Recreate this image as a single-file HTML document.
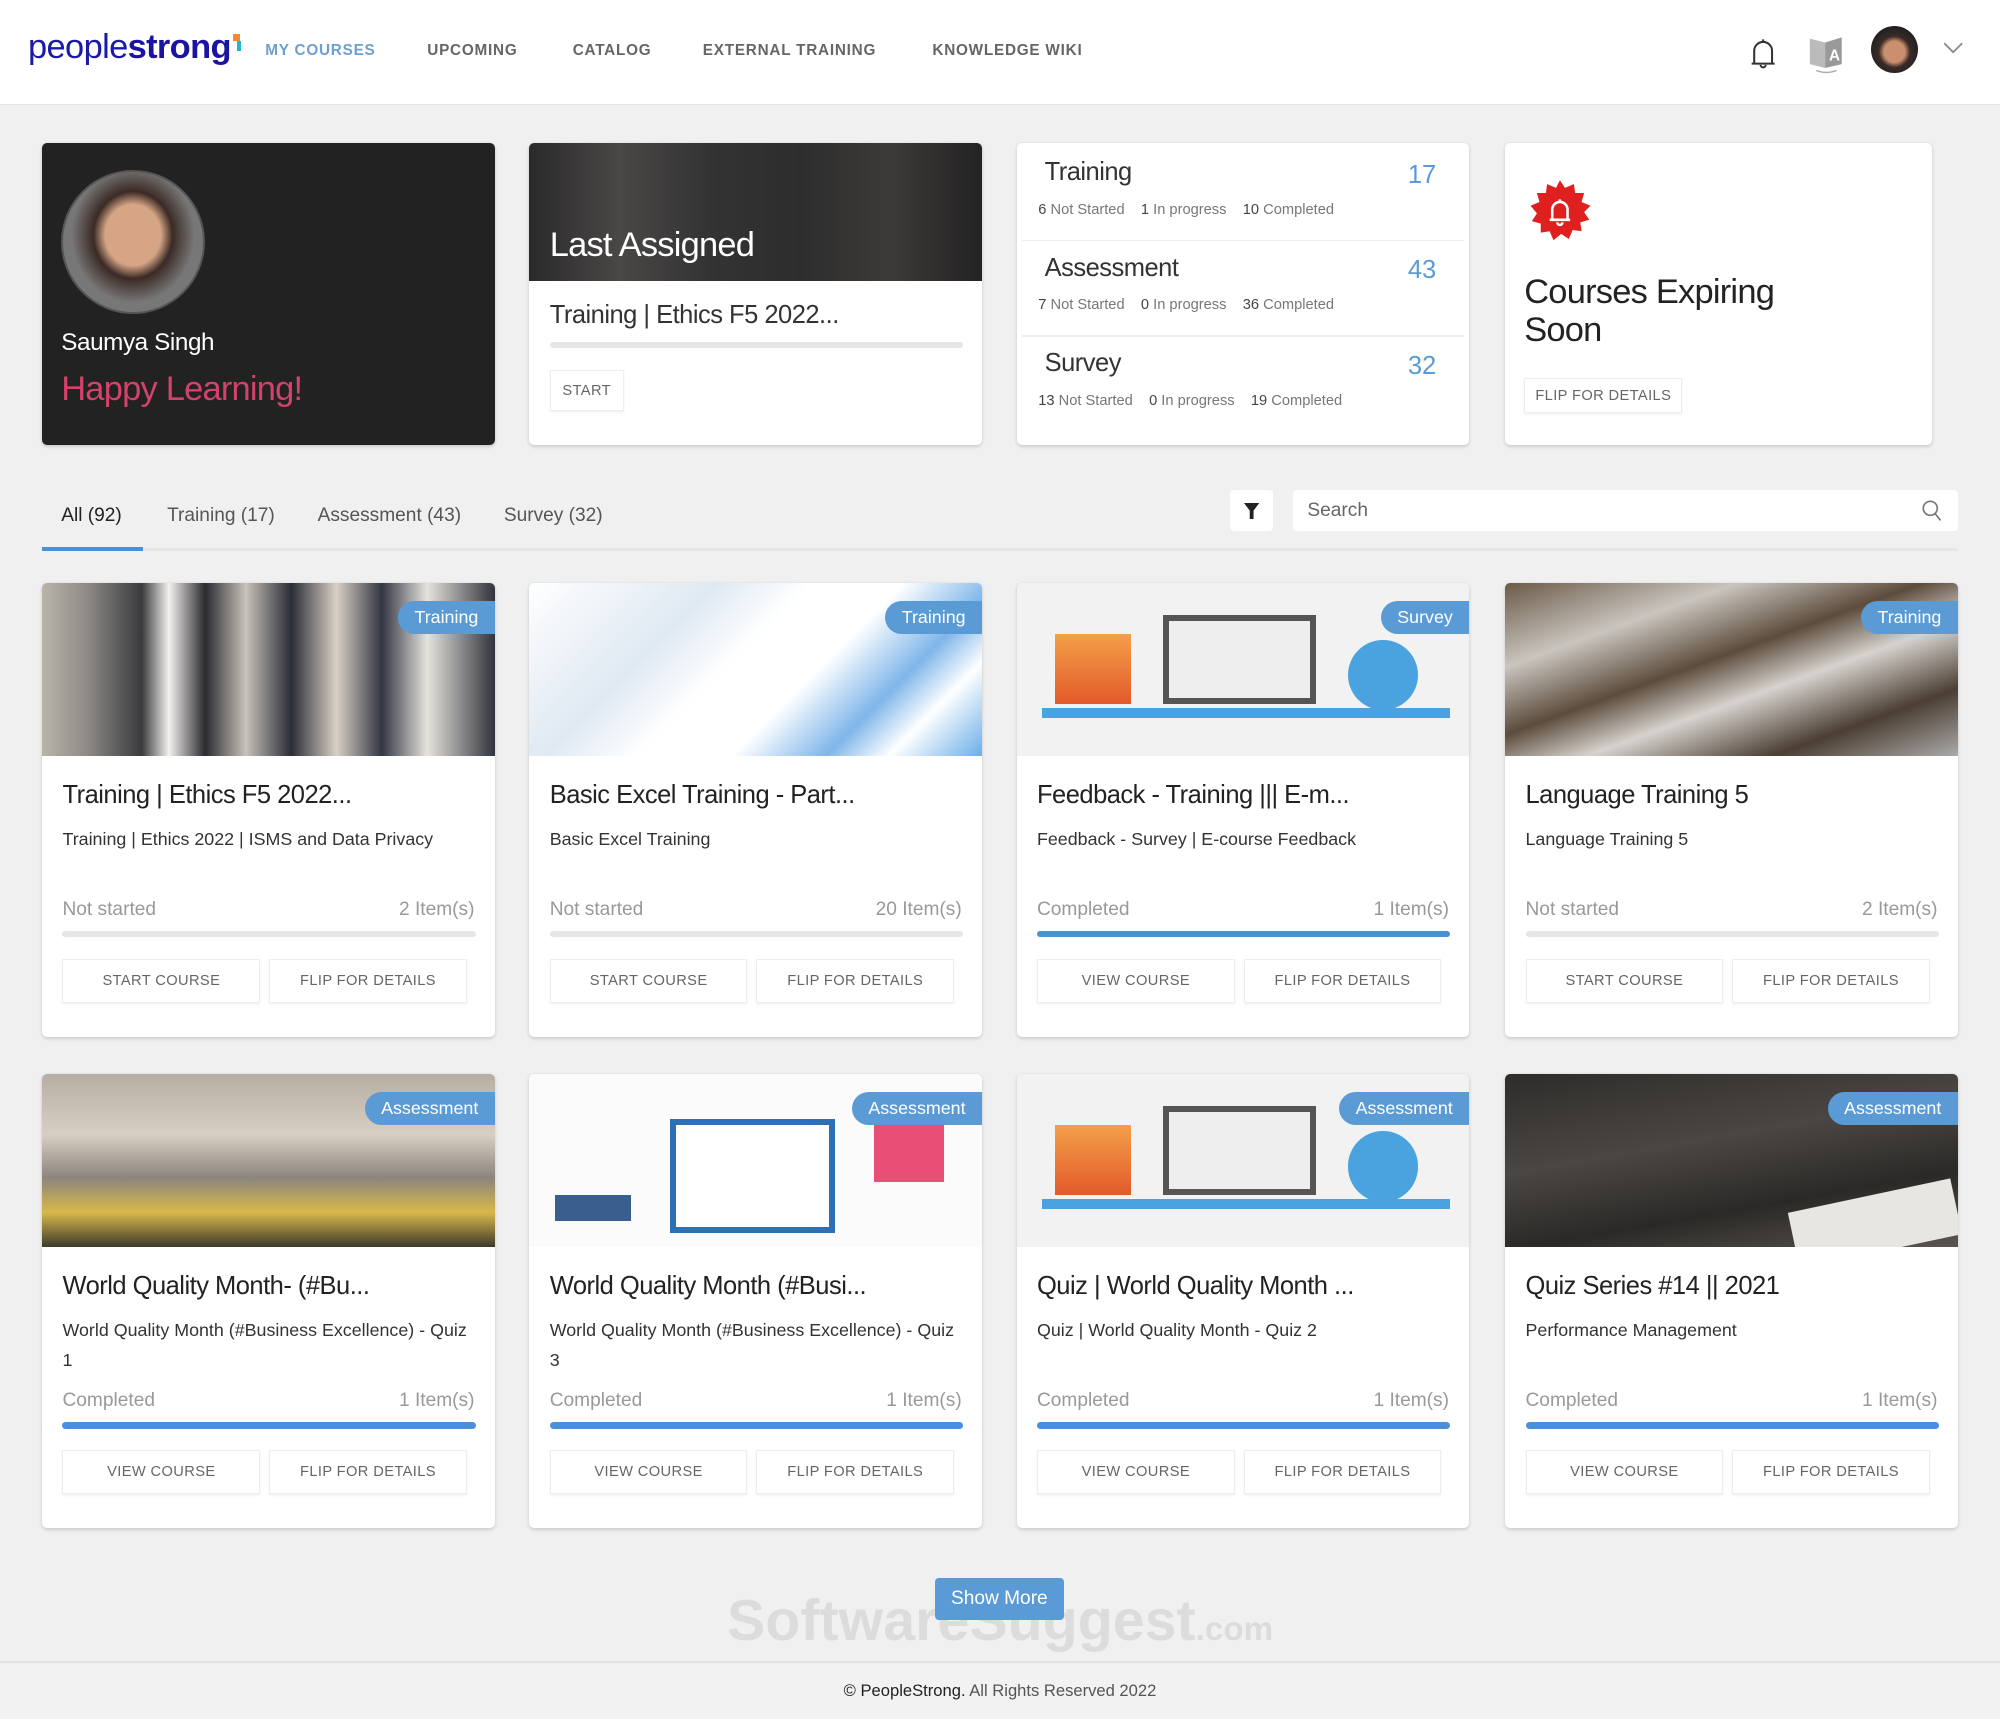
<!DOCTYPE html>
<html><head><meta charset="utf-8">
<style>
*{box-sizing:border-box;margin:0;padding:0}
html,body{width:2000px;height:1719px;overflow:hidden;background:#f0f0f0}
#w{zoom:1.27551;width:1568px;height:1348px;position:relative;font-family:"Liberation Sans",Arial,sans-serif;color:#222;background:#f0f0f0}
.a{position:absolute}
.hdr{left:0;top:0;width:1568px;height:82px;background:#fff;border-bottom:1px solid #e4e4e4}
.nav{top:33px;font-size:12px;font-weight:bold;letter-spacing:.6px;color:#666}
.card{background:#fff;border-radius:4px;box-shadow:0 1px 3px rgba(0,0,0,.18)}
.stt{font-size:20px;color:#333;left:22px;letter-spacing:-.4px}
.num{font-size:20px;color:#5b9bd5;right:26px}
.sub{font-size:11.5px;color:#777;left:17px}
.sub b{color:#444;font-weight:normal}
.btn{border:1px solid #eee;box-shadow:0 1px 2px rgba(0,0,0,.06);font-size:11.5px;color:#666;text-align:center;letter-spacing:.3px;background:#fff}
.cc{width:355px;height:356px}
.img{left:0;top:0;width:355px;height:136px;border-radius:4px 4px 0 0;overflow:hidden}
.bdg{right:0;top:14px;height:26px;padding:0 13px;line-height:26px;background:#5b9bd5;color:#fff;font-size:14px;border-radius:13px 0 0 13px}
.t{left:16px;top:155px;font-size:20px;color:#222;white-space:nowrap;letter-spacing:-.4px}
.s{left:16px;top:190px;width:325px;font-size:14px;color:#333;line-height:23px}
.st{left:16px;top:248px;font-size:15px;color:#999}
.it{right:16px;top:248px;font-size:15px;color:#999}
.bar{left:16px;top:273px;width:324px;height:5px;border-radius:3px;background:#e6e6e6}
.bar.f{background:#4a90d9}
.b1{left:16px;top:295px;width:155px;height:34px;line-height:34px}
.b2{left:178px;top:295px;width:155px;height:34px;line-height:34px}
</style></head><body><div id="w">

<div class="a hdr"></div>
<div class="a" style="left:22px;top:22px;font-size:27px;color:#1a1aa8;letter-spacing:-.5px">people<b style="color:#1a14a0">strong</b></div>
<div class="a" style="left:183px;top:27px;width:5px;height:5px;background:#f28b2b"></div>
<div class="a" style="left:186px;top:32px;width:3px;height:8px;background:#20b5c8"></div>
<div class="a nav" style="left:208px;color:#6fa0cc">MY COURSES</div>
<div class="a nav" style="left:335px">UPCOMING</div>
<div class="a nav" style="left:449px">CATALOG</div>
<div class="a nav" style="left:551px">EXTERNAL TRAINING</div>
<div class="a nav" style="left:731px">KNOWLEDGE WIKI</div>
<svg class="a" style="left:1367px;top:26px" width="30" height="30" viewBox="0 0 30 30" fill="none" stroke="#333" stroke-width="1.6"><path d="M6 24h18M8 24V14a7 7 0 0 1 14 0v10M15 7V5M13 25a2 2 0 0 0 4 0"/></svg>
<svg class="a" style="left:1416px;top:24px" width="32" height="34" viewBox="0 0 32 34"><path d="M3 6l12 3v20L3 26z" fill="#bbb"/><path d="M15 9l13-4v21l-13 3z" fill="#999"/><text x="18" y="23" font-size="12" font-weight="bold" fill="#fff" font-family="Liberation Sans">A</text><path d="M8 31q8 3 16 0" stroke="#aaa" fill="none"/></svg>
<div class="a" style="left:1467px;top:20px;width:37px;height:37px;border-radius:50%;background:radial-gradient(circle at 50% 55%,#c98f6e 0 30%,#3a2a26 45%,#222 70%)"></div>
<svg class="a" style="left:1523px;top:33px" width="16" height="10" viewBox="0 0 16 10"><path d="M1 1l7 7 7-7" stroke="#888" fill="none" stroke-width="1.4"/></svg>

<!-- top cards -->
<div class="a card" style="left:33px;top:112px;width:355px;height:237px;background:#222"></div>
<div class="a" style="left:48px;top:133px;width:113px;height:113px;border-radius:50%;background:radial-gradient(ellipse at 50% 45%,#d5a586 0 28%,#3b2a25 40%,#777 62%);border:2px solid #555"></div>
<div class="a" style="left:48px;top:258px;font-size:19px;color:#fff;letter-spacing:-.3px">Saumya Singh</div>
<div class="a" style="left:48px;top:290px;font-size:27px;color:#d2426a;letter-spacing:-.6px">Happy Learning!</div>

<div class="a card" style="left:415px;top:112px;width:355px;height:237px"></div>
<div class="a" style="left:415px;top:112px;width:355px;height:108px;border-radius:4px 4px 0 0;background:linear-gradient(90deg,#2a2a2a,#4a4746 20%,#333 40%,#2d2d2d 60%,#3d3a38 80%,#232323)"></div>
<div class="a" style="left:431px;top:177px;font-size:27px;color:#fff;letter-spacing:-.6px">Last Assigned</div>
<div class="a" style="left:431px;top:236px;font-size:20px;color:#333;letter-spacing:-.4px">Training | Ethics F5 2022...</div>
<div class="a" style="left:431px;top:268px;width:324px;height:5px;border-radius:3px;background:#e6e6e6"></div>
<div class="a btn" style="left:431px;top:290px;width:58px;height:32px;line-height:32px">START</div>

<div class="a card" style="left:797px;top:112px;width:355px;height:237px">
 <div class="a stt" style="top:12px">Training</div><div class="a num" style="top:14px">17</div>
 <div class="a sub" style="top:46px"><b>6</b> Not Started &nbsp;&nbsp; <b>1</b> In progress &nbsp;&nbsp; <b>10</b> Completed</div>
 <div class="a" style="left:4px;top:76px;width:347px;height:1px;background:#eee"></div>
 <div class="a stt" style="top:87px">Assessment</div><div class="a num" style="top:89px">43</div>
 <div class="a sub" style="top:121px"><b>7</b> Not Started &nbsp;&nbsp; <b>0</b> In progress &nbsp;&nbsp; <b>36</b> Completed</div>
 <div class="a" style="left:4px;top:151px;width:347px;height:1px;background:#eee"></div>
 <div class="a stt" style="top:162px">Survey</div><div class="a num" style="top:164px">32</div>
 <div class="a sub" style="top:196px"><b>13</b> Not Started &nbsp;&nbsp; <b>0</b> In progress &nbsp;&nbsp; <b>19</b> Completed</div>
</div>

<div class="a card" style="left:1180px;top:112px;width:335px;height:237px">
 <svg class="a" style="left:18px;top:28px" width="50" height="50" viewBox="0 0 50 50"><polygon fill="#e0201f" points="25,1 29,7 36,4 37,11 44,11 42,18 49,21 44,26 48,32 41,34 42,41 35,40 32,47 26,43 20,48 17,41 10,42 10,35 3,33 7,27 2,21 9,18 7,11 14,11 15,4 22,7"/><path d="M17 32h16M19 32v-8a6 6 0 0 1 12 0v8M25 16v2M23 34a2 2 0 0 0 4 0" stroke="#fff" stroke-width="2" fill="none"/></svg>
 <div class="a" style="left:15px;top:102px;font-size:27px;color:#222;line-height:30px;letter-spacing:-.6px">Courses Expiring<br>Soon</div>
 <div class="a btn" style="left:15px;top:184px;width:124px;height:28px;line-height:28px">FLIP FOR DETAILS</div>
</div>

<!-- tabs -->
<div class="a" style="left:48px;top:396px;font-size:15px;color:#222">All (92)</div>
<div class="a" style="left:131px;top:396px;font-size:15px;color:#555">Training (17)</div>
<div class="a" style="left:249px;top:396px;font-size:15px;color:#555">Assessment (43)</div>
<div class="a" style="left:395px;top:396px;font-size:15px;color:#555">Survey (32)</div>
<div class="a" style="left:33px;top:430px;width:1502px;height:2px;background:#e6e6e6"></div>
<div class="a" style="left:33px;top:429px;width:79px;height:3px;background:#4a90d9"></div>
<div class="a" style="left:964px;top:384px;width:34px;height:32px;background:#fff;border-radius:3px"></div>
<svg class="a" style="left:975px;top:394px" width="12" height="13" viewBox="0 0 12 13"><path d="M0 0h12L7.5 6v7h-3V6z" fill="#222"/></svg>
<div class="a" style="left:1014px;top:384px;width:521px;height:32px;background:#fff;border-radius:3px"></div>
<div class="a" style="left:1025px;top:392px;font-size:15px;color:#666">Search</div>
<svg class="a" style="left:1507px;top:392px" width="16" height="17" viewBox="0 0 16 17"><circle cx="6.5" cy="6.5" r="5.5" stroke="#777" stroke-width="1.3" fill="none"/><path d="M10.5 11l4 5" stroke="#777" stroke-width="1.3"/></svg>

<!-- row 1 -->
<div class="a card cc" style="left:33px;top:457px">
 <div class="a img" style="background:linear-gradient(90deg,#b9b4ab 0,#8d8a86 10%,#3a3a3e 22%,#f3f1ee 28%,#2b2b30 36%,#c7c2bb 45%,#2b2d36 55%,#d8d0c5 65%,#333643 75%,#e6e2dc 85%,#31343d 100%)"></div>
 <div class="a bdg">Training</div>
 <div class="a t">Training | Ethics F5 2022...</div>
 <div class="a s">Training | Ethics 2022 | ISMS and Data Privacy</div>
 <div class="a st">Not started</div><div class="a it">2 Item(s)</div>
 <div class="a bar"></div>
 <div class="a btn b1">START COURSE</div><div class="a btn b2">FLIP FOR DETAILS</div>
</div>
<div class="a card cc" style="left:415px;top:457px">
 <div class="a img" style="background:linear-gradient(135deg,#fff 0,#dfe9f2 30%,#fff 45%,#fff 60%,#7fb6ea 75%,#fff 85%,#6aaee8 100%)"></div>
 <div class="a bdg">Training</div>
 <div class="a t">Basic Excel Training - Part...</div>
 <div class="a s">Basic Excel Training</div>
 <div class="a st">Not started</div><div class="a it">20 Item(s)</div>
 <div class="a bar"></div>
 <div class="a btn b1">START COURSE</div><div class="a btn b2">FLIP FOR DETAILS</div>
</div>
<div class="a card cc" style="left:797px;top:457px">
 <div class="a img" style="background:#f2f2f2"><div class="a" style="left:115px;top:25px;width:120px;height:70px;border:5px solid #555;background:#eee"></div><div class="a" style="left:30px;top:40px;width:60px;height:55px;background:linear-gradient(#f4a04a,#e25a2a)"></div><div class="a" style="left:260px;top:45px;width:55px;height:55px;border-radius:50%;background:#4aa3df"></div><div class="a" style="left:20px;top:98px;width:320px;height:8px;background:#4aa3df"></div></div>
 <div class="a bdg">Survey</div>
 <div class="a t">Feedback - Training ||| E-m...</div>
 <div class="a s">Feedback - Survey | E-course Feedback</div>
 <div class="a st">Completed</div><div class="a it">1 Item(s)</div>
 <div class="a bar f"></div>
 <div class="a btn b1">VIEW COURSE</div><div class="a btn b2">FLIP FOR DETAILS</div>
</div>
<div class="a card cc" style="left:1180px;top:457px">
 <div class="a img" style="background:linear-gradient(160deg,#6b5a48 0,#c9c5bf 25%,#5c4c3c 45%,#d6d3cf 60%,#4b3e33 80%,#aaa 100%)"></div>
 <div class="a bdg">Training</div>
 <div class="a t">Language Training 5</div>
 <div class="a s">Language Training 5</div>
 <div class="a st">Not started</div><div class="a it">2 Item(s)</div>
 <div class="a bar"></div>
 <div class="a btn b1">START COURSE</div><div class="a btn b2">FLIP FOR DETAILS</div>
</div>

<!-- row 2 -->
<div class="a card cc" style="left:33px;top:842px">
 <div class="a img" style="background:linear-gradient(180deg,#b7aea3 0,#d8cfc4 35%,#8c857d 60%,#d9b84a 80%,#3d3a2c 100%)"></div>
 <div class="a bdg">Assessment</div>
 <div class="a t">World Quality Month- (#Bu...</div>
 <div class="a s">World Quality Month (#Business Excellence) - Quiz 1</div>
 <div class="a st">Completed</div><div class="a it">1 Item(s)</div>
 <div class="a bar f"></div>
 <div class="a btn b1">VIEW COURSE</div><div class="a btn b2">FLIP FOR DETAILS</div>
</div>
<div class="a card cc" style="left:415px;top:842px">
 <div class="a img" style="background:#fbfbfb"><div class="a" style="left:110px;top:35px;width:130px;height:90px;border:5px solid #2f6fb3;background:#fff"></div><div class="a" style="left:270px;top:40px;width:55px;height:45px;background:#e94e77"></div><div class="a" style="left:20px;top:95px;width:60px;height:20px;background:#3a5f8f"></div></div>
 <div class="a bdg">Assessment</div>
 <div class="a t">World Quality Month (#Busi...</div>
 <div class="a s">World Quality Month (#Business Excellence) - Quiz 3</div>
 <div class="a st">Completed</div><div class="a it">1 Item(s)</div>
 <div class="a bar f"></div>
 <div class="a btn b1">VIEW COURSE</div><div class="a btn b2">FLIP FOR DETAILS</div>
</div>
<div class="a card cc" style="left:797px;top:842px">
 <div class="a img" style="background:#f2f2f2"><div class="a" style="left:115px;top:25px;width:120px;height:70px;border:5px solid #555;background:#eee"></div><div class="a" style="left:30px;top:40px;width:60px;height:55px;background:linear-gradient(#f4a04a,#e25a2a)"></div><div class="a" style="left:260px;top:45px;width:55px;height:55px;border-radius:50%;background:#4aa3df"></div><div class="a" style="left:20px;top:98px;width:320px;height:8px;background:#4aa3df"></div></div>
 <div class="a bdg">Assessment</div>
 <div class="a t">Quiz | World Quality Month ...</div>
 <div class="a s">Quiz | World Quality Month - Quiz 2</div>
 <div class="a st">Completed</div><div class="a it">1 Item(s)</div>
 <div class="a bar f"></div>
 <div class="a btn b1">VIEW COURSE</div><div class="a btn b2">FLIP FOR DETAILS</div>
</div>
<div class="a card cc" style="left:1180px;top:842px">
 <div class="a img" style="background:linear-gradient(170deg,#2e2c2a 0,#4a4643 40%,#2b2927 70%,#5a5550 100%)"><div class="a" style="left:225px;top:95px;width:130px;height:45px;background:#e8e6e2;transform:rotate(-12deg)"></div></div>
 <div class="a bdg">Assessment</div>
 <div class="a t">Quiz Series #14 || 2021</div>
 <div class="a s">Performance Management</div>
 <div class="a st">Completed</div><div class="a it">1 Item(s)</div>
 <div class="a bar f"></div>
 <div class="a btn b1">VIEW COURSE</div><div class="a btn b2">FLIP FOR DETAILS</div>
</div>

<div class="a" style="left:570px;top:1245px;font-size:45px;font-weight:bold;color:#dcdcdc;white-space:nowrap">SoftwareSuggest<span style="font-size:26px">.com</span></div>
<div class="a" style="left:733px;top:1237px;width:101px;height:33px;background:#5b9bd5;border-radius:3px;color:#fff;font-size:15px;text-align:center;line-height:33px">Show More</div>
<div class="a" style="left:0;top:1302px;width:1568px;height:46px;border-top:2px solid #e2e2e2;background:#f2f2f2"></div>
<div class="a" style="left:0;top:1318px;width:1568px;text-align:center;font-size:13px;color:#555"><b style="color:#222;font-weight:normal">© PeopleStrong.</b> All Rights Reserved 2022</div>
</div></body></html>
